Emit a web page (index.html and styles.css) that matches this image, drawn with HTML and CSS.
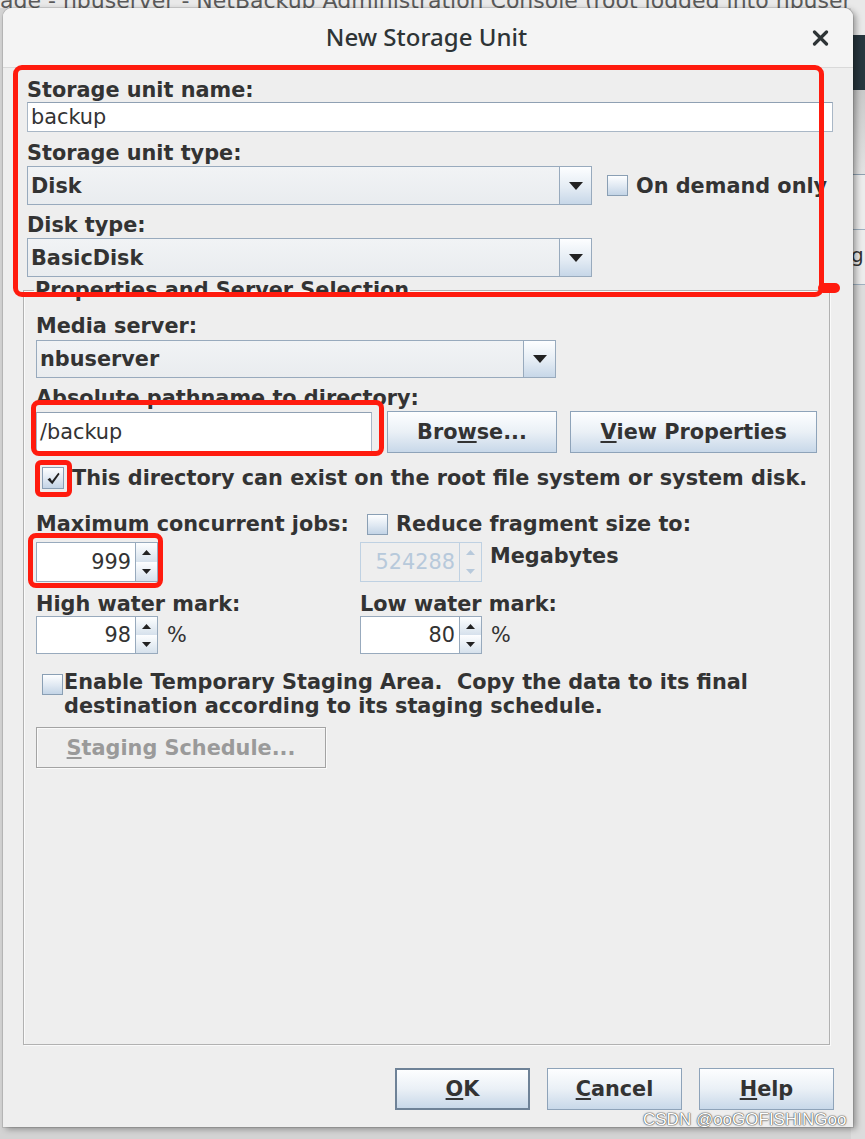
FILE: index.html
```html
<!DOCTYPE html>
<html lang="en">
<head>
    <meta charset="UTF-8">
    <title>New Storage Unit</title>
    <link rel="stylesheet" href="styles.css">
</head>
<body>
    <div class="desktop">
        <div class="backdrop-title">age - nbuserver - NetBackup Administration Console (root logged into nbuserver)</div>
        <div class="backdrop-side">
            <div class="side-light"></div>
            <div class="side-dark"></div>
            <div class="side-grey"></div>
            <div class="side-row"></div>
            <div class="side-row">gr</div>
            <div class="side-fill"></div>
        </div>

        <div class="dialog">
            <div class="titlebar">
                <span></span>
                <span class="title">New Storage Unit</span>
                <span class="close">
                    <svg width="17" height="17" viewBox="0 0 17 17"><path d="M2.5 3 L14.5 15 M14.5 3 L2.5 15" stroke="#2e3436" stroke-width="3.2" stroke-linecap="round"/></svg>
                </span>
            </div>

            <div class="dialog-body">
                <div class="top-section">
                    <div class="label">Storage unit name:</div>
                    <div class="textfield name-field">backup</div>

                    <div class="label mt-9">Storage unit type:</div>
                    <div class="row mt-1">
                        <div class="combo type-combo">
                            <span class="combo-text">Disk</span>
                            <span class="combo-arrow"><svg width="14" height="8" viewBox="0 0 14 8"><polygon points="0,0 14,0 7,8" fill="#222"/></svg></span>
                        </div>
                        <div class="check demand-check">
                            <span class="box"></span>
                            <span>On demand only</span>
                        </div>
                    </div>

                    <div class="label mt-8">Disk type:</div>
                    <div class="row mt-1">
                        <div class="combo type-combo">
                            <span class="combo-text">BasicDisk</span>
                            <span class="combo-arrow"><svg width="14" height="8" viewBox="0 0 14 8"><polygon points="0,0 14,0 7,8" fill="#222"/></svg></span>
                        </div>
                    </div>
                </div>

                <fieldset class="group">
                    <legend>Properties and Server Selection</legend>

                    <div class="label mt-12">Media server:</div>
                    <div class="combo server-combo mt-2">
                        <span class="combo-text">nbuserver</span>
                        <span class="combo-arrow"><svg width="14" height="8" viewBox="0 0 14 8"><polygon points="0,0 14,0 7,8" fill="#222"/></svg></span>
                    </div>

                    <div class="label mt-8">Absolute pathname to directory:</div>
                    <div class="path-row">
                        <div class="textfield path-field">/backup</div>
                        <button class="btn browse-btn">Bro<u>w</u>se...</button>
                        <button class="btn view-btn"><u>V</u>iew Properties</button>
                    </div>

                    <div class="check root-check">
                        <span class="box">
                            <svg width="15" height="15" viewBox="0 0 15 15"><path d="M1.5 8.5 L4 6.8 L6 10 L12.3 1.8 L13.6 3 L6.3 13.2 Z" fill="#222"/></svg>
                        </span>
                        <span>This directory can exist on the root file system or system disk.</span>
                    </div>

                    <div class="limits">
                        <div class="label">Maximum concurrent jobs:</div>
                        <div class="check reduce-check">
                            <span class="box"></span>
                            <span>Reduce fragment size to:</span>
                        </div>

                        <div class="spinner tall">
                            <span class="spin-value">999</span>
                            <span class="spin-arrows">
                                <span><svg width="9" height="5" viewBox="0 0 9 5"><polygon points="0,5 9,5 4.5,0" fill="#222"/></svg></span>
                                <span><svg width="9" height="5" viewBox="0 0 9 5"><polygon points="0,0 9,0 4.5,5" fill="#222"/></svg></span>
                            </span>
                        </div>
                        <div class="spin-with-unit">
                            <div class="spinner tall disabled">
                                <span class="spin-value">524288</span>
                                <span class="spin-arrows">
                                    <span><svg width="9" height="5" viewBox="0 0 9 5"><polygon points="0,5 9,5 4.5,0" fill="#b7c9db"/></svg></span>
                                    <span><svg width="9" height="5" viewBox="0 0 9 5"><polygon points="0,0 9,0 4.5,5" fill="#b7c9db"/></svg></span>
                                </span>
                            </div>
                            <span class="label unit-top">Megabytes</span>
                        </div>

                        <div class="label mt-10">High water mark:</div>
                        <div class="label mt-10">Low water mark:</div>

                        <div class="spin-with-unit">
                            <div class="spinner">
                                <span class="spin-value">98</span>
                                <span class="spin-arrows">
                                    <span><svg width="9" height="5" viewBox="0 0 9 5"><polygon points="0,5 9,5 4.5,0" fill="#222"/></svg></span>
                                    <span><svg width="9" height="5" viewBox="0 0 9 5"><polygon points="0,0 9,0 4.5,5" fill="#222"/></svg></span>
                                </span>
                            </div>
                            <span class="unit">%</span>
                        </div>
                        <div class="spin-with-unit">
                            <div class="spinner">
                                <span class="spin-value">80</span>
                                <span class="spin-arrows">
                                    <span><svg width="9" height="5" viewBox="0 0 9 5"><polygon points="0,5 9,5 4.5,0" fill="#222"/></svg></span>
                                    <span><svg width="9" height="5" viewBox="0 0 9 5"><polygon points="0,0 9,0 4.5,5" fill="#222"/></svg></span>
                                </span>
                            </div>
                            <span class="unit">%</span>
                        </div>
                    </div>

                    <div class="check staging-check">
                        <span class="box"></span>
                        <span>Enable Temporary Staging Area.&nbsp; Copy the data to its final<br>destination according to its staging schedule.</span>
                    </div>

                    <button class="btn staging-btn" disabled><u>S</u>taging Schedule...</button>
                </fieldset>
            </div>

            <div class="footer">
                <button class="btn default"><u>O</u>K</button>
                <button class="btn"><u>C</u>ancel</button>
                <button class="btn"><u>H</u>elp</button>
            </div>
        </div>

        <!-- red annotation marks drawn over the screenshot -->
        <div class="mark mark-top"></div>
        <div class="mark-blob"></div>
        <div class="mark mark-path"></div>
        <div class="mark mark-check"></div>
        <div class="mark mark-jobs"></div>

        <div class="watermark">CSDN @ooGOFISHINGoo</div>
    </div>
</body>
</html>
```

FILE: styles.css
```css
* {
    box-sizing: border-box;
}

html, body {
    margin: 0;
    height: 100%;
    overflow: hidden;
}

body {
    font-family: "DejaVu Sans", sans-serif;
    font-size: 20.8px;
    color: #333;
    background: #d6d6d6;
}

.desktop {
    position: relative;
    width: 865px;
    height: 1139px;
    overflow: hidden;
    background: #d3d3d3;
}

.backdrop-title {
    height: 20px;
    margin-top: -12px;
    white-space: nowrap;
    font-size: 22px;
    line-height: 26px;
    color: #5a5a5a;
    background: #e9e9e9;
}

.backdrop-side {
    position: absolute;
    top: 0;
    right: 0;
    width: 14px;
    height: 100%;
    display: flex;
    flex-direction: column;
}

.side-light {
    height: 35px;
    background: #e9e9e9;
}

.side-dark {
    height: 55px;
    background: #27363e;
}

.side-grey {
    height: 85px;
    background: linear-gradient(#c9c9c9, #e2e2e2);
    border-bottom: 1px solid #8ea0b0;
}

.side-row {
    height: 55px;
    font-size: 20px;
    line-height: 50px;
    color: #333;
    background: #ececec;
    border-bottom: 1px solid #9fb0c0;
}

.side-fill {
    flex: 1;
    background: #dcdcdc;
}

/* dialog window */

.dialog {
    position: absolute;
    left: 3px;
    top: 8px;
    width: 850px;
    height: 1119px;
    background: #eeeeee;
    border-radius: 9px 9px 0 0;
    box-shadow: 0 0 0 1px rgba(0, 0, 0, 0.1), 3px 2px 6px rgba(0, 0, 0, 0.35);
    display: flex;
    flex-direction: column;
}

.titlebar {
    height: 60px;
    flex-shrink: 0;
    display: grid;
    grid-template-columns: 1fr auto 1fr;
    align-items: center;
    background: #f4f4f4;
    border-bottom: 1px solid #d9d9d9;
    border-radius: 9px 9px 0 0;
}

.title {
    font-family: "Noto Sans", sans-serif;
    font-size: 24px;
    font-weight: 500;
    color: #2e3436;
    margin-left: -3px;
    margin-top: -2px;
}

.close {
    justify-self: end;
    padding-right: 24px;
    display: flex;
}

.dialog-body {
    flex: 1;
    display: flex;
    flex-direction: column;
    padding: 10px 23px 0 20px;
}

.top-section {
    margin: 0 -3px 0 4px;
}

.label {
    font-weight: bold;
    line-height: 24px;
    white-space: nowrap;
}

.mt-1 { margin-top: 1px; }
.mt-2 { margin-top: 2px; }
.mt-8 { margin-top: 8px; }
.mt-9 { margin-top: 9px; }
.mt-10 { margin-top: 10px; }
.mt-12 { margin-top: 12px; }

.row {
    display: flex;
    align-items: center;
}

.textfield {
    background: #fff;
    border: 1px solid #a9b7c6;
    border-top-color: #8fa0b3;
    padding: 0 3px;
    display: flex;
    align-items: center;
}

.name-field {
    height: 30px;
}

.combo {
    display: flex;
    height: 39px;
    border: 1px solid #98aabd;
    background: linear-gradient(#f1f3f5, #e9ecef);
}

.type-combo {
    width: 565px;
}

.server-combo {
    width: 520px;
    height: 38px;
}

.combo-text {
    flex: 1;
    font-weight: bold;
    padding-left: 3px;
    display: flex;
    align-items: center;
}

.combo-arrow {
    width: 32px;
    border-left: 1px solid #98aabd;
    background: linear-gradient(#fdfeff, #e4ecf4 55%, #c7d7e8);
    display: flex;
    align-items: center;
    justify-content: center;
}

.check {
    display: flex;
    align-items: center;
    gap: 8px;
    font-weight: bold;
    line-height: 24px;
    white-space: nowrap;
}

.box {
    width: 21px;
    height: 21px;
    flex-shrink: 0;
    border: 1px solid #8a9fb4;
    background: linear-gradient(#fdfeff, #dfe8f2 55%, #c3d4e6);
    display: flex;
    align-items: center;
    justify-content: center;
}

.demand-check {
    margin-left: 15px;
}

/* group box */

.group {
    flex: 1;
    min-width: 0;
    margin: 1px 0 0;
    padding: 0 12px;
    border: 1px solid #b1b1b1;
    box-shadow: inset 1px 1px 0 #fafafa, 1px 1px 0 #fafafa;
}

.group legend {
    font-weight: bold;
    line-height: 24px;
    padding: 0 1px;
    margin-left: -2px;
}

.path-row {
    display: flex;
    align-items: center;
    height: 42px;
    margin-top: 1px;
}

.path-field {
    width: 336px;
    height: 40px;
}

.btn {
    height: 42px;
    font-family: "DejaVu Sans", sans-serif;
    font-size: 20.8px;
    font-weight: bold;
    color: #333;
    border: 1px solid #8ea3b9;
    background: linear-gradient(#fdfeff, #eaf0f6 50%, #c8d8e9);
    padding: 0;
    display: flex;
    align-items: center;
    justify-content: center;
}

.browse-btn {
    width: 171px;
    margin-left: 15px;
}

.view-btn {
    width: 247px;
    margin-left: 13px;
}

.root-check {
    margin-top: 13px;
    padding-left: 6px;
}

.root-check .box {
    width: 22px;
    height: 22px;
}

.limits {
    display: grid;
    grid-template-columns: 324px auto;
    align-items: start;
    margin-top: 22px;
}

.reduce-check {
    padding-left: 7px;
}

.spinner {
    display: flex;
    width: 122px;
    height: 38px;
    border: 1px solid #98aabd;
    background: #fff;
}

.spinner.tall {
    height: 40px;
    margin-top: 6px;
}

.spin-value {
    flex: 1;
    padding-right: 4px;
    display: flex;
    align-items: center;
    justify-content: flex-end;
}

.spin-arrows {
    width: 22px;
    border-left: 1px solid #98aabd;
    display: flex;
    flex-direction: column;
}

.spin-arrows span {
    flex: 1;
    display: flex;
    align-items: center;
    justify-content: center;
    background: linear-gradient(#fdfeff, #d6e1ec);
}

.spinner.disabled {
    border-color: #bfd1e2;
    background: #eeeeee;
    color: #b7c9db;
}

.spinner.disabled .spin-arrows {
    border-left-color: #bfd1e2;
}

.spinner.disabled .spin-arrows span {
    background: #eeeeee;
}

.spin-with-unit {
    display: flex;
    align-items: center;
    gap: 9px;
}

.unit-top {
    align-self: flex-start;
    margin-top: 8px;
    margin-left: -1px;
}

.unit {
    font-weight: normal;
}

.staging-check {
    margin-top: 16px;
    padding-left: 6px;
    gap: 1px;
    align-items: flex-start;
}

.staging-check .box {
    margin-top: 4px;
}

.staging-btn {
    width: 290px;
    height: 41px;
    margin-top: 9px;
    color: #9a9a9a;
    border: 1px solid #a3a3a3;
    box-shadow: inset 1px 1px 0 #fafafa, 1px 1px 0 #fafafa;
    background: #eeeeee;
}

.footer {
    display: flex;
    justify-content: flex-end;
    gap: 17px;
    padding: 23px 19px 17px 0;
}

.footer .btn {
    width: 135px;
}

.footer .btn.default {
    border: 2px solid #6e8297;
}

/* red annotations */

.mark {
    position: absolute;
    border: 5px solid #ff1b0e;
    border-radius: 9px;
}

.mark-top {
    left: 13px;
    top: 65px;
    width: 811px;
    height: 232px;
}

.mark-blob {
    position: absolute;
    left: 818px;
    top: 283px;
    width: 22px;
    height: 10px;
    border-radius: 5px;
    background: #ff1b0e;
}

.mark-path {
    left: 31px;
    top: 400px;
    width: 353px;
    height: 56px;
    border-radius: 8px;
}

.mark-check {
    left: 35px;
    top: 460px;
    width: 37px;
    height: 37px;
    border-radius: 6px;
}

.mark-jobs {
    left: 28px;
    top: 533px;
    width: 135px;
    height: 55px;
    border-radius: 8px;
}

.watermark {
    position: absolute;
    left: 643px;
    top: 1110px;
    font-family: "Liberation Sans", sans-serif;
    font-size: 17px;
    line-height: 20px;
    color: #fff;
    text-shadow: 0 0 1px #444, 0 0 1px #444, 0 0 2px #777;
    white-space: nowrap;
}
```
